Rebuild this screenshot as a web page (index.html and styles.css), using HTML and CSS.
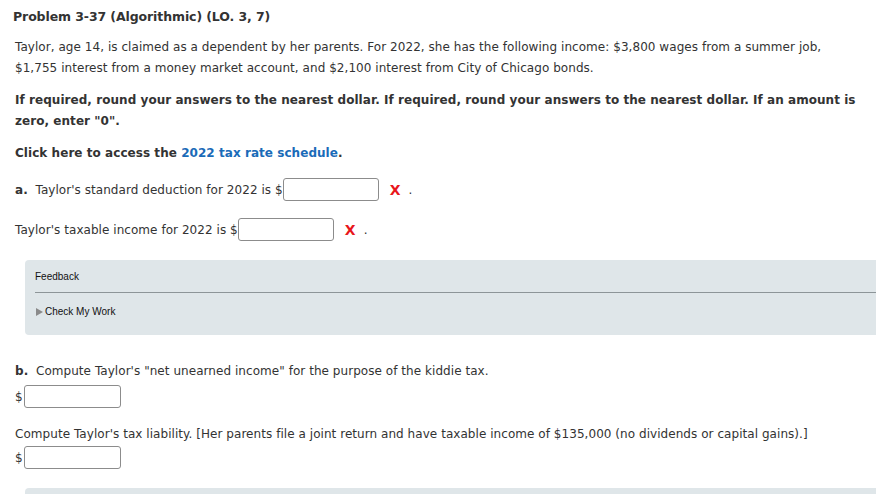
FILE: index.html
```html
<!DOCTYPE html>
<html>
<head>
<meta charset="utf-8">
<link rel="stylesheet" href="styles.css">
</head>
<body>
<div class="page">
  <h1 class="title">Problem 3-37 (Algorithmic) (LO. 3, 7)</h1>
  <div class="content">
    <p class="para">Taylor, age 14, is claimed as a dependent by her parents. For 2022, she has the following income: $3,800 wages from a summer job, $1,755 interest from a money market account, and $2,100 interest from City of Chicago bonds.</p>
    <p class="para bold">If required, round your answers to the nearest dollar. If required, round your answers to the nearest dollar. If an amount is zero, enter "0".</p>
    <p class="para bold">Click here to access the <a class="link" href="#">2022 tax rate schedule</a>.</p>

    <div class="row row-a">
      <span><b class="label">a.</b>&nbsp; Taylor's standard deduction for 2022 is $</span><span class="input"></span><span class="wrong">X</span><span class="dot">.</span>
    </div>
    <div class="row row-a2">
      <span>Taylor's taxable income for 2022 is $</span><span class="input"></span><span class="wrong">X</span><span class="dot">.</span>
    </div>

    <div class="feedback">
      <div class="fb-head">Feedback</div>
      <div class="fb-body"><span class="tri"></span>Check My Work</div>
    </div>

    <p class="line-b"><b class="label">b.</b>&nbsp; Compute Taylor's "net unearned income" for the purpose of the kiddie tax.</p>
    <div class="row row-d"><span>$</span><span class="input"></span></div>

    <p class="line-c">Compute Taylor's tax liability. [Her parents file a joint return and have taxable income of $135,000 (no dividends or capital gains).]</p>
    <div class="row row-d2"><span>$</span><span class="input"></span></div>

    <div class="feedback next"></div>
  </div>
</div>
</body>
</html>
```

FILE: styles.css
```css
html, body {
  margin: 0;
  padding: 0;
  background: #fff;
}
body {
  font-family: "DejaVu Sans", Verdana, sans-serif;
  font-size: 12px;
  letter-spacing: 0.05px;
  color: #333;
  overflow: hidden;
}
.page {
  width: 876px;
}
.title {
  font-size: 12.5px;
  font-weight: bold;
  line-height: 16px;
  letter-spacing: -0.1px;
  margin: 9px 0 0 13px;
}
.content {
  padding-left: 15px;
}
.para {
  margin: 11px 0 0 0;
  line-height: 21px;
  padding-right: 20px;
}
.content .para:first-child {
  margin-top: 12px;
}
.bold {
  font-weight: bold;
}
.link {
  color: #1a6bb8;
  text-decoration: none;
}
.row {
  display: flex;
  align-items: center;
  height: 23px;
}
.row-a { margin-top: 14px; }
.row-a2 { margin-top: 17px; }
.label { font-weight: bold; }
.input {
  display: inline-block;
  width: 94px;
  height: 21px;
  border: 1px solid #8c8c8c;
  border-radius: 3px;
  background: #fff;
}
.wrong {
  color: #e8161b;
  font-weight: bold;
  margin-left: 11px;
  font-size: 14px;
}
.dot {
  margin-left: 8px;
}
.feedback {
  margin: 19px 0 0 10px;
  background: #dfe6e9;
  border-radius: 4px 0 0 4px;
  height: 75px;
  padding-left: 10px;
  font-family: "Liberation Sans", Arial, sans-serif;
  font-size: 10px;
  letter-spacing: 0;
  color: #111;
}
.fb-head {
  padding-top: 11px;
  height: 21px;
  line-height: 12px;
  border-bottom: 1px solid #8d9598;
}
.fb-body {
  padding-top: 13px;
  line-height: 12px;
  display: flex;
  align-items: center;
}
.tri {
  display: inline-block;
  width: 0;
  height: 0;
  border-top: 4px solid transparent;
  border-bottom: 4px solid transparent;
  border-left: 7px solid #8a8a8a;
  margin-left: 1px;
  margin-right: 2px;
}
.line-b {
  margin: 26px 0 0 0;
  line-height: 21px;
}
.row-d {
  margin-top: 3px;
}
.row-d .input, .row-d2 .input {
  width: 95px;
  margin-left: 1px;
}
.line-c {
  margin: 16px 0 0 0;
  line-height: 21px;
}
.row-d2 {
  margin-top: 1px;
}
.feedback.next {
  margin-top: 19px;
  height: 20px;
}
```
